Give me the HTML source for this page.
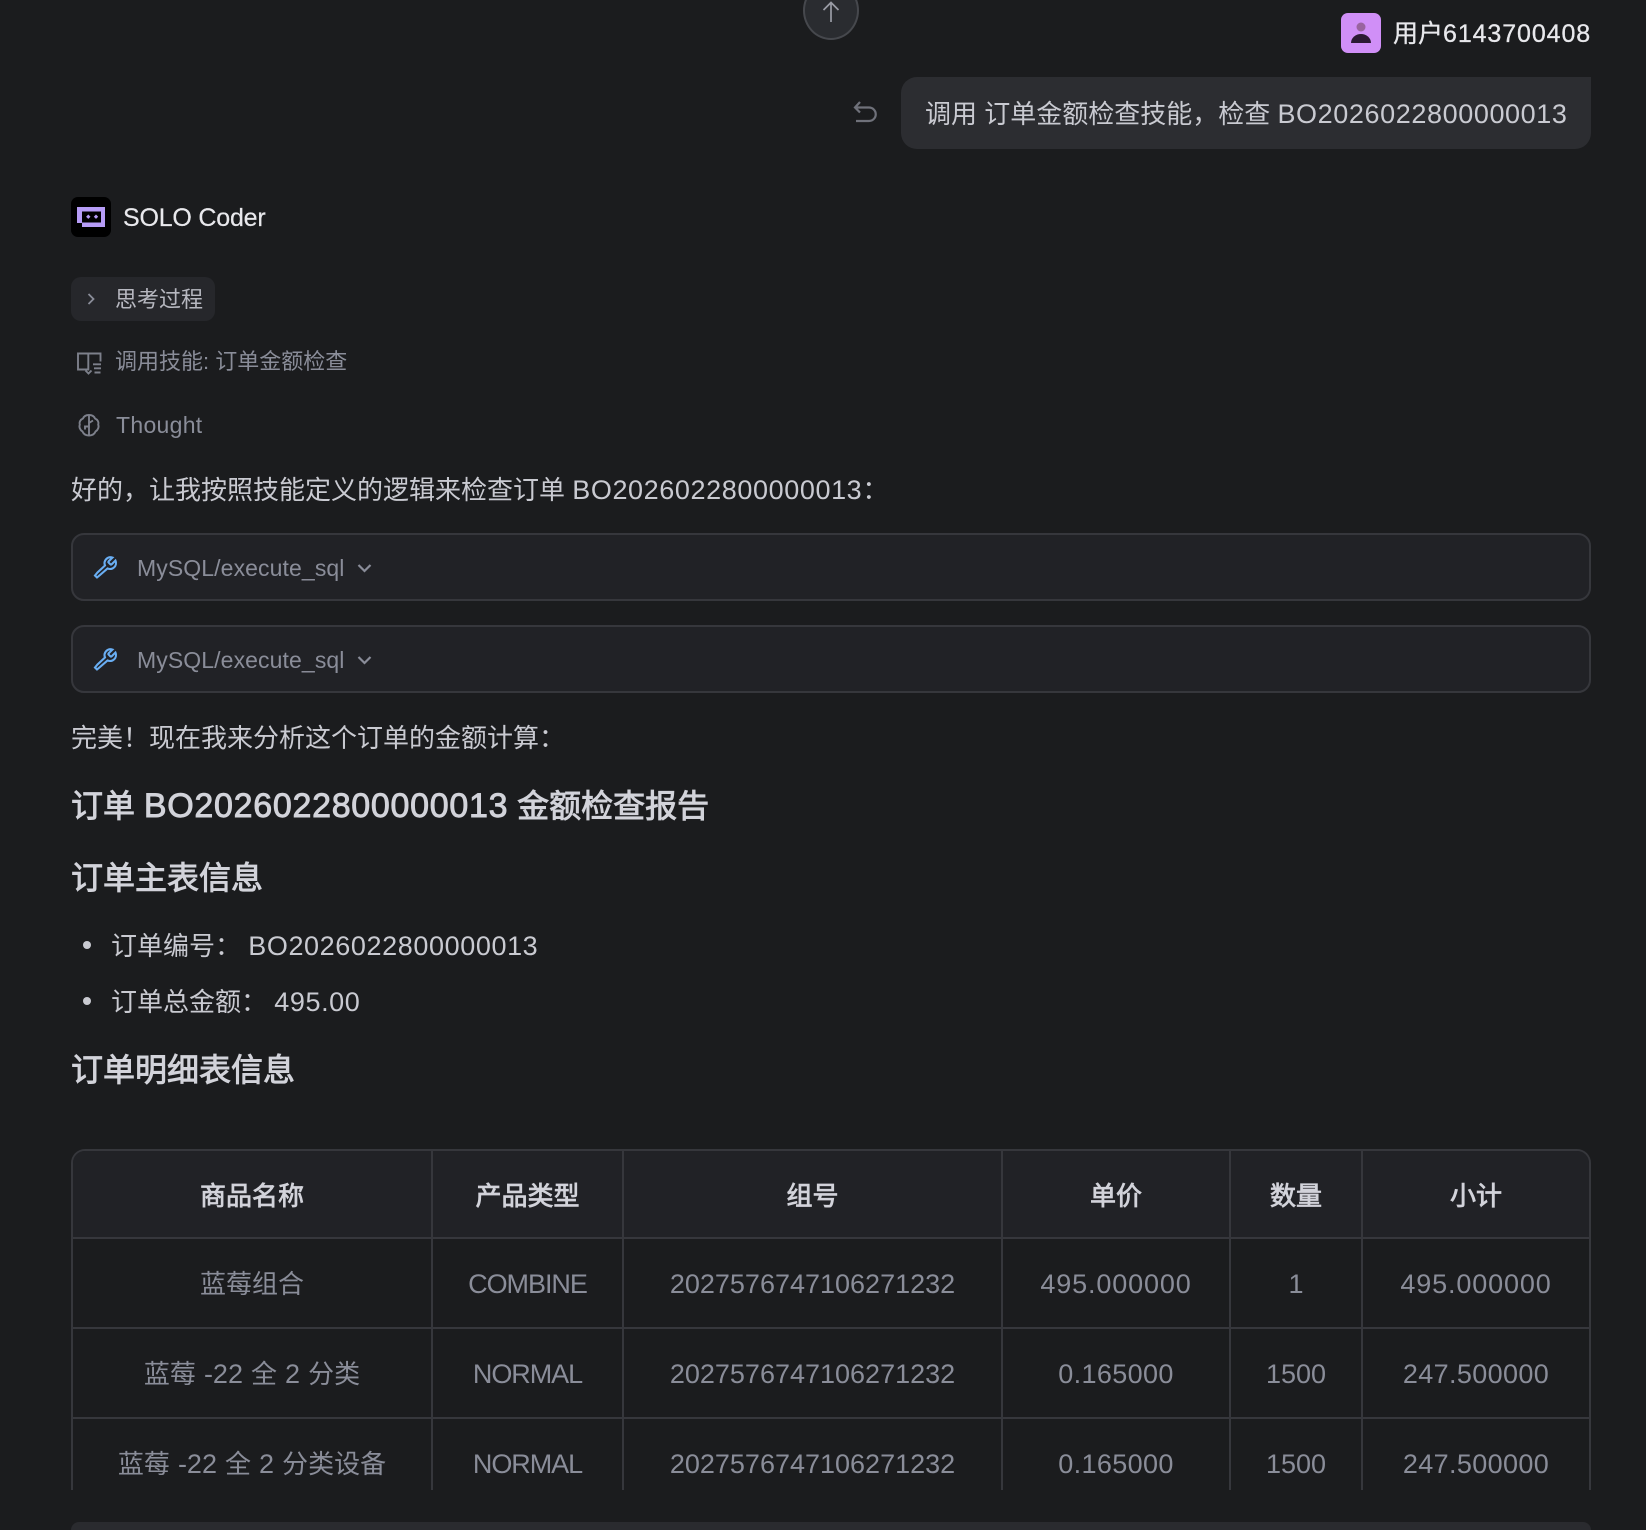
<!DOCTYPE html>
<html lang="zh-CN"><head><meta charset="utf-8"><title>SOLO Coder</title>
<style>
html,body{margin:0;padding:0;background:#1b1c1e}
html{overflow:hidden}
body{width:1646px;height:1530px;position:relative;overflow:hidden;font-family:"Liberation Sans","Noto Sans CJK SC",sans-serif;color:#c9cad1}
.t{position:absolute;white-space:nowrap;height:40px;line-height:40px;font-size:26px}
.l{font-size:27px;letter-spacing:.6px}
.g{color:#8a8d99;font-size:22px}
.lg{font-size:23px}
.h{font-size:32px;font-weight:400;color:#d2d3da;-webkit-text-stroke:.9px #d2d3da}
.h .l{font-size:34px;letter-spacing:.7px}
svg{position:absolute;overflow:visible}
.card{position:absolute;left:71px;width:1516px;height:64px;background:#212226;border:2px solid #36373c;border-radius:13px}
.tw{position:absolute;left:71px;top:1149px;width:1520px;height:341px;overflow:hidden;box-sizing:border-box;border:2px solid #36373c;border-bottom:none;border-radius:14px 14px 0 0}
table{border-collapse:separate;border-spacing:0;table-layout:fixed;width:1516px;font-size:26px;color:#8a8d99}
td,th{text-align:center;padding:0;border-right:2px solid #36373c;border-bottom:2px solid #36373c;white-space:nowrap;box-sizing:border-box;line-height:40px}
td:last-child,th:last-child{border-right:none}
th{height:88px;background:#212226;color:#d2d3da;font-weight:400;font-size:26px;-webkit-text-stroke:.8px #d2d3da;padding-top:4px}
td{height:90px;word-spacing:.8px;padding-top:2px}
td .l{letter-spacing:0}
td .a{letter-spacing:.85px}
td .b{letter-spacing:.35px}
td .c{letter-spacing:-1.05px}
</style></head><body>

<div style="position:absolute;left:803px;top:-19px;width:52px;height:55px;border-radius:50%;background:#2a2c30;border:2px solid #46484d"></div>
<svg style="left:819px;top:0" width="24" height="24" viewBox="0 0 24 24" fill="none" stroke="#9a9ca5" stroke-width="1.7"><path d="M12 22V2.500M4.500 10 12 2.500 19.500 10"/></svg>

<div style="position:absolute;left:1341px;top:13px;width:40px;height:40px;border-radius:7px;background:#d08ff7"></div>
<svg style="left:1341px;top:13px" width="40" height="40" viewBox="0 0 40 40"><circle cx="20" cy="14" r="4.500" fill="#99649f"/><path d="M10 30a10 9 0 0 1 20 0z" fill="#2b1a33"/></svg>
<div class="t" style="left:1393px;top:14px;color:#e8e8ec;font-size:25px;-webkit-text-stroke:.3px #e8e8ec">用户<span style="letter-spacing:.9px">6143700408</span></div>

<svg style="left:853px;top:101px" width="24" height="22" viewBox="0 0 24 22" fill="none" stroke="#6f717a" stroke-width="2.2"><path d="M7 1 2 6.500 7 11.500M2 6.500h14a6 6 0 0 1 0 13.500H3"/></svg>
<div style="position:absolute;left:901px;top:77px;width:690px;height:72px;background:#2c2d31;border-radius:16px 0 16px 16px"></div>
<div class="t" style="left:925px;top:94px">调用 订单金额检查技能，检查 <span class="l">BO2026022800000013</span></div>

<div style="position:absolute;left:71px;top:197px;width:40px;height:40px;border-radius:7px;background:#000"></div>
<svg style="left:71px;top:197px" width="40" height="40" viewBox="0 0 40 40" fill="none"><path fill-rule="evenodd" fill="#b69cf6" d="M6 10h28v20H11v-4H6zM11 14.500v11h19v-11z"/><path fill="#b69cf6" d="M17.300 17.500l2.200 2.200-2.200 2.200-2.200-2.200zM25 17.500l2.200 2.200-2.200 2.200-2.200-2.200z"/></svg>
<div class="t" style="left:123px;top:198px;color:#e8e8ec;font-size:25px;letter-spacing:-.2px;-webkit-text-stroke:.2px #e8e8ec">SOLO Coder</div>

<div style="position:absolute;left:71px;top:277px;width:144px;height:44px;border-radius:10px;background:#26272b"></div>
<svg style="left:85px;top:292px" width="12" height="14" viewBox="0 0 12 14" fill="none" stroke="#8a8d99" stroke-width="1.800"><path d="M3.500 2 8.500 7 3.500 12"/></svg>
<div class="t g" style="left:115px;top:280px;color:#b7b8c0">思考过程</div>

<svg style="left:77px;top:352px" width="26" height="22" viewBox="0 0 26 22" fill="none" stroke="#7d808b" stroke-width="1.900"><path d="M11.300 17.500H1V1.500h10.300v17M11.300 1.500H23.500V9.500M16 12.300h8M17 16.300h7M17.500 20.500h6M8.500 18.500l3 3 3-3"/></svg>
<div class="t g" style="left:115px;top:342px">调用技能: 订单金额检查</div>

<svg style="left:77px;top:413px" width="24" height="24" viewBox="0 0 24 24" fill="none" stroke="#7d808b" stroke-width="1.900"><path d="M12 2c-3 0-5 1-6 3.500C3.500 6.500 2 9 2.800 11.500 1.800 14 3 17 5.500 18.500 6.500 21 9 22.500 12 22.500s5.500-1.500 6.500-4c2.500-1.500 3.700-4.500 2.700-7C22 9 20.500 6.500 18 5.500 17 3 15 2 12 2zM12 2v20.500M12 13.500H8v3M12 10l4-2.500"/></svg>
<div class="t g lg" style="left:116px;top:405px;letter-spacing:.3px">Thought</div>

<div class="t" style="left:71px;top:470px">好的，让我按照技能定义的逻辑来检查订单 <span class="l">BO2026022800000013</span>：</div>

<div class="card" style="top:533px"></div>
<svg style="left:93.500px;top:555px" width="24" height="24" viewBox="0 0 24 24" fill="none" stroke="#69aef3" stroke-width="2.100"><path d="M14.700 6.300a1 1 0 0 0 0 1.400l1.600 1.600a1 1 0 0 0 1.400 0l3.770-3.770a6 6 0 0 1-7.940 7.940L6 20l-3 2.500L1 20.500 3.500 17.500l7.500-7a6 6 0 0 1 7.470-7.940z"/></svg>
<div class="t g lg" style="left:137px;top:548px;letter-spacing:.1px">MySQL/execute_sql</div>
<svg style="left:357px;top:563px" width="15" height="11" viewBox="0 0 15 11" fill="none" stroke="#8a8d99" stroke-width="2.200"><path d="M1.500 2 7.500 8l6-6"/></svg>

<div class="card" style="top:625px"></div>
<svg style="left:93.500px;top:647px" width="24" height="24" viewBox="0 0 24 24" fill="none" stroke="#69aef3" stroke-width="2.100"><path d="M14.700 6.300a1 1 0 0 0 0 1.400l1.600 1.600a1 1 0 0 0 1.400 0l3.770-3.770a6 6 0 0 1-7.940 7.940L6 20l-3 2.500L1 20.500 3.500 17.500l7.500-7a6 6 0 0 1 7.470-7.940z"/></svg>
<div class="t g lg" style="left:137px;top:640px;letter-spacing:.1px">MySQL/execute_sql</div>
<svg style="left:357px;top:655px" width="15" height="11" viewBox="0 0 15 11" fill="none" stroke="#8a8d99" stroke-width="2.200"><path d="M1.500 2 7.500 8l6-6"/></svg>

<div class="t" style="left:71px;top:718px">完美！现在我来分析这个订单的金额计算：</div>

<div class="t h" style="left:71px;top:786px">订单 <span class="l">BO2026022800000013</span> 金额检查报告</div>
<div class="t h" style="left:71px;top:858px">订单主表信息</div>

<div style="position:absolute;left:83px;top:941px;width:8px;height:8px;border-radius:50%;background:#c9cad1"></div>
<div class="t" style="left:111px;top:926px">订单编号： <span class="l">BO2026022800000013</span></div>
<div style="position:absolute;left:83px;top:997px;width:8px;height:8px;border-radius:50%;background:#c9cad1"></div>
<div class="t" style="left:111px;top:982px">订单总金额： <span class="l">495.00</span></div>

<div class="t h" style="left:71px;top:1050px">订单明细表信息</div>

<div class="tw">
<table>
<colgroup><col style="width:360px"><col style="width:191px"><col style="width:379px"><col style="width:228px"><col style="width:132px"><col style="width:226px"></colgroup>
<tr><th>商品名称</th><th>产品类型</th><th>组号</th><th>单价</th><th>数量</th><th>小计</th></tr>
<tr><td>蓝莓组合</td><td><span class="l c">COMBINE</span></td><td><span class="l">2027576747106271232</span></td><td><span class="l a">495.000000</span></td><td><span class="l">1</span></td><td><span class="l a">495.000000</span></td></tr>
<tr><td>蓝莓 <span class="l">-22</span> 全 <span class="l">2</span> 分类</td><td><span class="l c">NORMAL</span></td><td><span class="l">2027576747106271232</span></td><td><span class="l b">0.165000</span></td><td><span class="l">1500</span></td><td><span class="l b">247.500000</span></td></tr>
<tr><td>蓝莓 <span class="l">-22</span> 全 <span class="l">2</span> 分类设备</td><td><span class="l c">NORMAL</span></td><td><span class="l">2027576747106271232</span></td><td><span class="l b">0.165000</span></td><td><span class="l">1500</span></td><td><span class="l b">247.500000</span></td></tr>
</table>
</div>

<div style="position:absolute;left:71px;top:1522px;width:1520px;height:8px;background:#2a2b2f;border-radius:14px 14px 0 0"></div>
</body></html>
